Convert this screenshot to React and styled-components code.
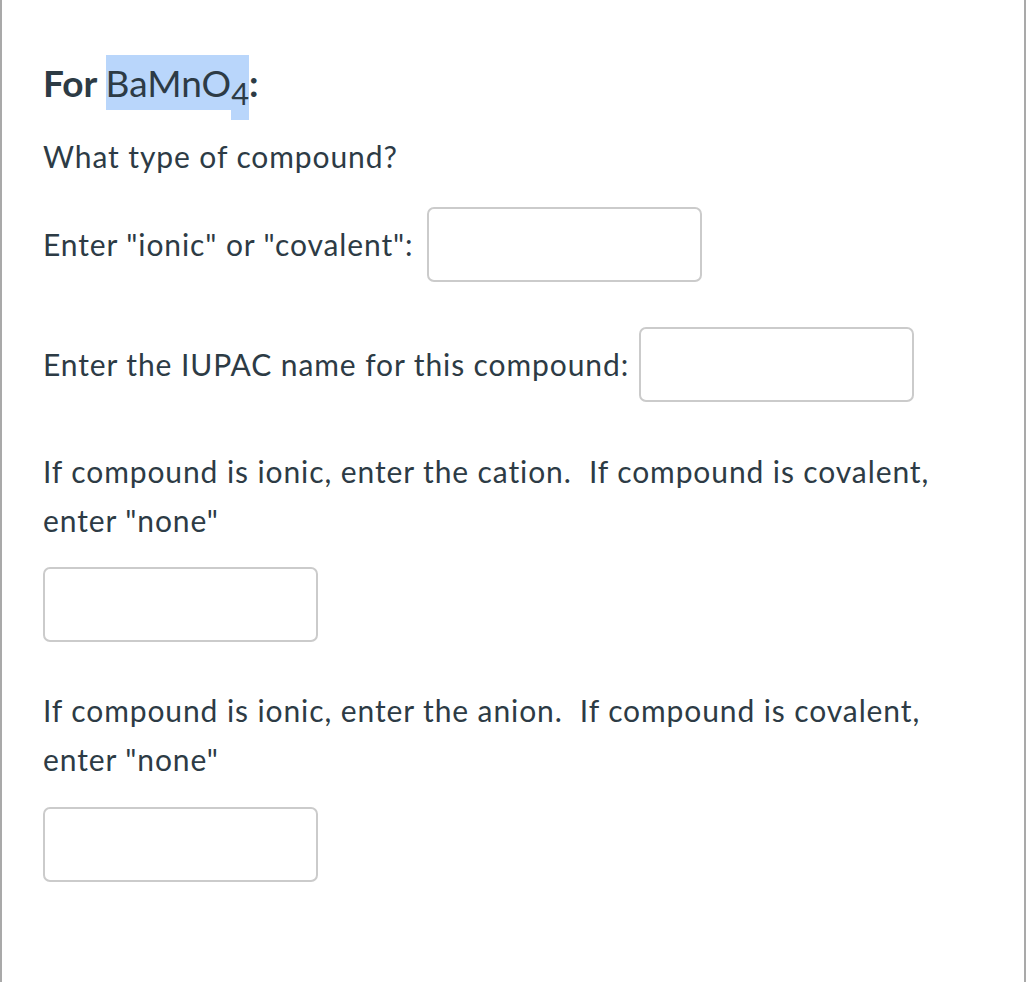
import React from 'react';
import styled, { createGlobalStyle } from 'styled-components';

const GlobalStyle = createGlobalStyle`
  html, body {
    margin: 0;
    padding: 0;
    background: #ffffff;
  }
  body {
    font-family: Lato, "Open Sans", "Liberation Sans", sans-serif;
    color: #2d3b45;
  }
`;

const Page = styled.div`
  box-sizing: border-box;
  width: 1026px;
  min-height: 982px;
  border-left: 2px solid #a9a9a9;
  border-right: 2px solid #a9a9a9;
  padding: 55px 0 0 41px;
`;

const Heading = styled.h2`
  margin: 0 0 22px;
  font-size: 37px;
  line-height: 55px;
  font-weight: 700;
  white-space: nowrap;
`;

const Selected = styled.span`
  font-weight: 400;
  background: #b9d6fb;
  padding: 5px 0;
`;

const Sub = styled.sub`
  font-size: smaller;
  background: #b9d6fb;
  padding: 8px 0;
  line-height: 0;
`;

const Text = styled.p`
  margin: ${(p) => p.$before || 0}px 0 0;
  font-size: 30px;
  letter-spacing: 0.9px;
  line-height: 49px;
`;

const Row = styled.div`
  display: flex;
  align-items: center;
  gap: ${(p) => p.$gap}px;
  margin: ${(p) => p.$before || 0}px 0 0;
`;

const Label = styled.span`
  font-size: 30px;
  letter-spacing: 0.9px;
  line-height: 49px;
`;

const Field = styled.input`
  box-sizing: border-box;
  display: block;
  width: 275px;
  height: 75px;
  margin: ${(p) => p.$before || 0}px 0 0;
  padding: 0 14px;
  border: 2px solid #cbcbcb;
  border-radius: 7px;
  background: #fff;
  font-family: inherit;
  font-size: 28px;
  color: #2d3b45;
  outline: none;
`;

export default function App() {
  return (
    <>
      <GlobalStyle />
      <Page>
        <Heading>
          For <Selected>BaMnO<Sub>4</Sub></Selected>:
        </Heading>
        <Text>What type of compound?</Text>
        <Row $gap={13} $before={26}>
          <Label>Enter "ionic" or "covalent":</Label>
          <Field type="text" />
        </Row>
        <Row $gap={10} $before={45}>
          <Label>Enter the IUPAC name for this compound:</Label>
          <Field type="text" />
        </Row>
        <Text $before={45}>
          If compound is ionic, enter the cation.&nbsp; If compound is covalent,
          <br />
          enter "none"
        </Text>
        <Field type="text" $before={22} />
        <Text $before={44}>
          If compound is ionic, enter the anion.&nbsp; If compound is covalent,
          <br />
          enter "none"
        </Text>
        <Field type="text" $before={23} />
      </Page>
    </>
  );
}
